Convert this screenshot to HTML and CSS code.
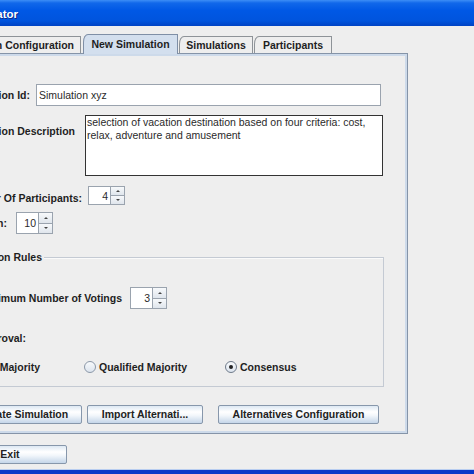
FILE: index.html
```html
<!DOCTYPE html>
<html lang="en">
<head>
<meta charset="utf-8">
<title>Simulator</title>
<link rel="stylesheet" href="styles.css">
</head>
<body>
<div class="window">
  <div class="titlebar">
    <div class="cut title-cut"><span class="title">Simulator</span></div>
  </div>
  <div class="tabs">
    <div class="cut tab1-cut"><div class="tab tab-first">Simulation Configuration</div></div>
    <div class="tab tab-selected">New Simulation</div>
    <div class="tab tab-sims">Simulations</div>
    <div class="tab tab-parts">Participants</div>
  </div>
  <div class="panel">
    <div class="row row-id">
      <div class="cut cut-id"><span class="label">Simulation Id:</span></div>
      <div class="textfield">Simulation xyz</div>
    </div>
    <div class="row row-desc">
      <div class="cut cut-desc"><span class="label">Simulation Description</span></div>
      <div class="textarea">selection of vacation destination based on four criteria: cost, relax, adventure and amusement</div>
    </div>
    <div class="row row-parts">
      <div class="cut cut-parts"><span class="label">Number Of Participants:</span></div>
      <div class="spinner spinner-parts">
        <div class="spin-value">4</div>
        <div class="spin-buttons"><span class="spin-up"></span><span class="spin-down"></span></div>
      </div>
    </div>
    <div class="row row-iter">
      <div class="cut cut-iter"><span class="label">Iteration:</span></div>
      <div class="spinner spinner-iter">
        <div class="spin-value">10</div>
        <div class="spin-buttons"><span class="spin-up"></span><span class="spin-down"></span></div>
      </div>
    </div>
    <div class="group">
      <span class="group-title">Decision Rules</span>
      <div class="row row-votes">
        <div class="cut cut-votes"><span class="label">Minimum Number of Votings</span></div>
        <div class="spinner spinner-votes">
          <div class="spin-value">3</div>
          <div class="spin-buttons"><span class="spin-up"></span><span class="spin-down"></span></div>
        </div>
      </div>
      <div class="row row-approval">
        <div class="cut cut-approval"><span class="label">Approval:</span></div>
      </div>
      <div class="row row-radios">
        <div class="cut cut-simple"><div class="radio-item"><span class="radio"></span><span>Simple Majority</span></div></div>
        <div class="radio-item radio-qual"><span class="radio"></span><span>Qualified Majority</span></div>
        <div class="radio-item"><span class="radio checked"></span><span>Consensus</span></div>
      </div>
    </div>
    <div class="row row-buttons">
      <div class="cut cut-create"><div class="btn btn-create">Create Simulation</div></div>
      <div class="btn btn-import">Import Alternati...</div>
      <div class="btn btn-alt">Alternatives Configuration</div>
    </div>
  </div>
  <div class="row row-exit">
    <div class="cut cut-exit"><div class="btn btn-exit">Exit</div></div>
  </div>
  <div class="frame-bottom"></div>
</div>
</body>
</html>
```
FILE: styles.css
```css
* { box-sizing: border-box; }
html, body { margin: 0; padding: 0; }
body {
  width: 474px;
  height: 474px;
  overflow: hidden;
  background: #eeeeee;
  font-family: "Liberation Sans", Arial, sans-serif;
  font-size: 10.5px;
  color: #2a2a2a;
}
.window { display: flex; flex-direction: column; height: 474px; }
.cut { display: flex; justify-content: flex-end; flex: none; white-space: nowrap; }
.label { font-weight: bold; line-height: 13px; color: #1e1e1e; }

/* title bar */
.titlebar {
  height: 26px;
  flex: none;
  display: flex;
  align-items: center;
  padding-top: 2px;
  background: linear-gradient(#3d8ef6 0, #1168ea 3px, #0058e5 40%, #0054dd 80%, #0043c4 100%);
}
.title-cut { width: 18px; }
.title { color: #fff; font-weight: bold; font-size: 11.5px; text-shadow: 1px 1px 0 #0b2c8a; }

/* tabs */
.tabs {
  display: flex;
  align-items: flex-end;
  height: 19px;
  margin-top: 8px;
  flex: none;
  position: relative;
  z-index: 2;
}
.tab {
  height: 17px;
  border: 1px solid #8e9398;
  border-bottom: none;
  background: #eeeeee;
  font-weight: bold;
  line-height: 16px;
  text-align: center;
  white-space: nowrap;
  border-top-left-radius: 5px 8px;
  flex: none;
  color: #1e1e1e;
}
.tab1-cut { width: 81px; }
.tab-first { width: 140px; text-align: right; padding-right: 6px; }
.tab-selected {
  margin-left: 2px;
  width: 95px;
  height: 20px;
  margin-bottom: -1px;
  background: #d3dfee;
  border-color: #7f8fa6;
  line-height: 18px;
}
.tab-sims { margin-left: 1px; width: 74px; }
.tab-parts { margin-left: 1px; width: 78px; }

/* panel */
.panel {
  flex: none;
  margin-left: -3px;
  width: 411px;
  height: 381px;
  border: 1px solid #8594a8;
  box-shadow: inset 2px 2px 0 #cddaea, inset -2px -2px 0 #cddaea;
  display: flex;
  flex-direction: column;
  position: relative;
  z-index: 1;
}
.row { display: flex; align-items: center; flex: none; }

.row-id { margin-top: 30px; height: 22px; }
.cut-id { width: 32px; }
.textfield {
  margin-left: 6px;
  width: 345px;
  height: 22px;
  border: 1px solid #9aa3ae;
  background: #fff;
  padding-left: 2px;
  line-height: 20px;
  white-space: nowrap;
}

.row-desc { margin-top: 9px; align-items: flex-start; }
.cut-desc { width: 77px; margin-top: 10px; }
.textarea {
  margin-left: 10px;
  width: 298px;
  height: 61px;
  border: 1px solid #333;
  background: #fff;
  padding: 0 3px 0 1px;
  line-height: 12.5px;
}

.row-parts { margin-top: 10px; }
.cut-parts { width: 84px; margin-top: 6px; }
.spinner-parts { margin-left: 6px; width: 37px; height: 19px; }

.row-iter { margin-top: 7px; }
.cut-iter { width: 9px; }
.spinner-iter { margin-left: 9px; width: 37px; height: 22px; }

/* spinner */
.spinner { display: flex; border: 1px solid #9aa3ae; background: #fff; flex: none; }
.spin-value { flex: 1; display: flex; align-items: center; justify-content: flex-end; padding-right: 2px; }
.spin-buttons { width: 14px; display: flex; flex-direction: column; border-left: 1px solid #9aa3ae; }
.spin-buttons span { flex: 1; background: linear-gradient(#f7f9fb, #dfe5ec); position: relative; }
.spin-up { border-bottom: 1px solid #9aa3ae; }
.spin-up::after, .spin-down::after {
  content: "";
  position: absolute;
  left: 50%;
  top: 50%;
  margin-left: -2px;
  margin-top: -1px;
  border-left: 2px solid transparent;
  border-right: 2px solid transparent;
}
.spin-up::after { border-bottom: 2px solid #444; }
.spin-down::after { border-top: 2px solid #444; }

/* group */
.group {
  margin-top: 23px;
  margin-left: -3px;
  width: 389px;
  height: 130px;
  border: 1px solid #c4cad3;
  box-shadow: inset 1px 1px 0 #fafafa;
  position: relative;
  flex: none;
  display: flex;
  flex-direction: column;
}
.group-title {
  position: absolute;
  top: -7px;
  right: 339px;
  padding: 0 2px;
  background: #eeeeee;
  font-weight: bold;
  line-height: 13px;
  white-space: nowrap;
  color: #1e1e1e;
}
.row-votes { margin-top: 29px; }
.cut-votes { width: 126px; }
.spinner-votes { margin-left: 8px; width: 37px; height: 22px; }
.row-approval { margin-top: 23px; }
.cut-approval { width: 30px; }
.row-radios { margin-top: 15px; height: 14px; }
.cut-simple { width: 44px; }
.radio-item { display: flex; align-items: center; gap: 3px; font-weight: bold; white-space: nowrap; flex: none; color: #1e1e1e; }
.radio-qual { margin-left: 44px; width: 141px; }
.radio {
  width: 12px;
  height: 12px;
  border-radius: 50%;
  border: 1px solid #8b98a8;
  background: linear-gradient(#f8fafc, #dce4ee);
  flex: none;
  position: relative;
}
.radio.checked { border-color: #6f7b8a; }
.radio.checked::after {
  content: "";
  position: absolute;
  left: 3px;
  top: 3px;
  width: 4px;
  height: 4px;
  border-radius: 50%;
  background: #222;
}

/* buttons */
.row-buttons { margin-top: 18px; height: 19px; }
.cut-create { width: 84px; }
.btn {
  height: 19px;
  border: 1px solid #8797ab;
  border-radius: 2px;
  background: linear-gradient(#dde8f3 0%, #ffffff 35%, #f3f7fb 55%, #c5d6e9 100%);
  font-weight: bold;
  line-height: 17px;
  text-align: center;
  white-space: nowrap;
  color: #222;
  flex: none;
}
.btn-create { width: 117px; }
.btn-import { margin-left: 5px; width: 116px; }
.btn-alt { margin-left: 15px; width: 161px; }

.row-exit { margin-top: 11px; }
.cut-exit { width: 67px; }
.btn-exit { width: 114px; }

.frame-bottom {
  margin-top: auto;
  height: 5px;
  flex: none;
  border-top: 1px solid #b8cdf0;
  background: #0a38c8;
}
```
